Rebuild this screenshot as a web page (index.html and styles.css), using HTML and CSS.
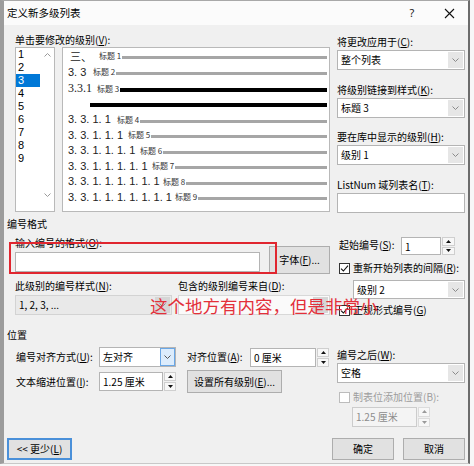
FILE: index.html
```html
<!DOCTYPE html>
<html lang="zh-CN">
<head>
<meta charset="utf-8">
<title>定义新多级列表</title>
<link rel="stylesheet" href="styles.css">
</head>
<body>
<div class="window">
  <div class="titlebar">
    <span class="title">定义新多级列表</span>
    <span class="tb-btn help">?</span>
    <span class="tb-btn close"><svg width="11" height="11" viewBox="0 0 11 11"><path d="M1 1 L10 10 M10 1 L1 10" stroke="#111" stroke-width="1.1" fill="none"/></svg></span>
  </div>

  <div class="main">
    <div class="col-left">
      <div class="lbl indent top-lbl">单击要修改的级别(<u>V</u>):</div>
      <div class="boxes">
        <div class="levels">
          <ul class="level-list">
            <li>1</li><li>2</li><li class="sel">3</li><li>4</li><li>5</li><li>6</li><li>7</li><li>8</li><li>9</li>
          </ul>
          <div class="scroll">
            <svg width="7" height="4" viewBox="0 0 7 4"><path d="M0.5 3.5 L3.5 0.5 L6.5 3.5" stroke="#9a9a9a" fill="none"/></svg>
            <svg width="7" height="4" viewBox="0 0 7 4"><path d="M0.5 0.5 L3.5 3.5 L6.5 0.5" stroke="#9a9a9a" fill="none"/></svg>
          </div>
        </div>
        <div class="preview">
          <div class="pv-row r1"><span class="num cjk w1">三、</span><span class="tag">标题 1</span><span class="bar"></span></div>
          <div class="pv-row r2"><span class="num w2">3. 3</span><span class="tag">标题 2</span><span class="bar"></span></div>
          <div class="pv-row r3"><span class="num serif w3">3.3.1</span><span class="tag">标题 3</span><span class="bar black"></span></div>
          <div class="pv-row r4"><span class="bar black"></span></div>
          <div class="pv-row rn"><span class="num w5">3. 3. 1. 1</span><span class="tag">标题 4</span><span class="bar"></span></div>
          <div class="pv-row rn"><span class="num w6">3. 3. 1. 1. 1</span><span class="tag">标题 5</span><span class="bar"></span></div>
          <div class="pv-row rn"><span class="num w7">3. 3. 1. 1. 1. 1</span><span class="tag">标题 6</span><span class="bar"></span></div>
          <div class="pv-row rn"><span class="num w8">3. 3. 1. 1. 1. 1. 1</span><span class="tag">标题 7</span><span class="bar"></span></div>
          <div class="pv-row rn"><span class="num w9">3. 3. 1. 1. 1. 1. 1. 1</span><span class="tag">标题 8</span><span class="bar"></span></div>
          <div class="pv-row rn"><span class="num w10">3. 3. 1. 1. 1. 1. 1. 1. 1</span><span class="tag">标题 9</span><span class="bar"></span></div>
        </div>
      </div>

      <div class="group-lbl fmt-group">编号格式</div>
      <div class="fmt-row">
        <div class="fmt-field">
          <div class="lbl">输入编号的格式(<u>O</u>):</div>
          <div class="input fmt-input"></div>
        </div>
        <div class="btn font-btn">字体(<u>F</u>)...</div>
      </div>

      <div class="style-row">
        <div class="field f-style">
          <div class="lbl">此级别的编号样式(<u>N</u>):</div>
          <div class="select gray"><span class="val">1, 2, 3, ...</span><span class="arrow dark"><svg width="7" height="4" viewBox="0 0 7 4"><path d="M0.5 0.5 L3.5 3.5 L6.5 0.5" stroke="#8a8a8a" fill="none"/></svg></span></div>
        </div>
        <div class="field f-from">
          <div class="lbl">包含的级别编号来自(<u>D</u>):</div>
          <div class="select soft"><span class="val"></span><span class="arrow dark"><svg width="7" height="4" viewBox="0 0 7 4"><path d="M0.5 0.5 L3.5 3.5 L6.5 0.5" stroke="#8a8a8a" fill="none"/></svg></span></div>
        </div>
      </div>

      <div class="group-lbl pos-group">位置</div>
      <div class="pos-grid">
        <div class="lbl pl1">编号对齐方式(<u>U</u>):</div>
        <div class="select"><span class="val">左对齐</span><span class="arrow focus"><svg width="7" height="4" viewBox="0 0 7 4"><path d="M0.5 0.5 L3.5 3.5 L6.5 0.5" stroke="#555" fill="none"/></svg></span></div>
        <div></div>
        <div class="lbl">对齐位置(<u>A</u>):</div>
        <div class="spin"><span class="val">0 厘米</span><span class="updown"><span class="ud"><svg width="5" height="3" viewBox="0 0 5 3"><path d="M0 3 L2.5 0 L5 3Z" fill="#111"/></svg></span><span class="ud"><svg width="5" height="3" viewBox="0 0 5 3"><path d="M0 0 L2.5 3 L5 0Z" fill="#111"/></svg></span></span></div>

        <div class="lbl pl1">文本缩进位置(<u>I</u>):</div>
        <div class="spin"><span class="val">1.25 厘米</span><span class="updown"><span class="ud"><svg width="5" height="3" viewBox="0 0 5 3"><path d="M0 3 L2.5 0 L5 3Z" fill="#111"/></svg></span><span class="ud"><svg width="5" height="3" viewBox="0 0 5 3"><path d="M0 0 L2.5 3 L5 0Z" fill="#111"/></svg></span></span></div>
        <div></div>
        <div class="btn all-btn">设置所有级别(<u>E</u>)...</div>
      </div>
    </div>

    <div class="col-right">
      <div class="lbl r-lbl1">将更改应用于(<u>C</u>):</div>
      <div class="select r-ctl"><span class="val">整个列表</span><span class="arrow"><svg width="7" height="4" viewBox="0 0 7 4"><path d="M0.5 0.5 L3.5 3.5 L6.5 0.5" stroke="#8a8a8a" fill="none"/></svg></span></div>
      <div class="lbl r-lbl2">将级别链接到样式(<u>K</u>):</div>
      <div class="select r-ctl"><span class="val">标题 3</span><span class="arrow"><svg width="7" height="4" viewBox="0 0 7 4"><path d="M0.5 0.5 L3.5 3.5 L6.5 0.5" stroke="#8a8a8a" fill="none"/></svg></span></div>
      <div class="lbl r-lbl3">要在库中显示的级别(<u>H</u>):</div>
      <div class="select r-ctl"><span class="val">级别 1</span><span class="arrow"><svg width="7" height="4" viewBox="0 0 7 4"><path d="M0.5 0.5 L3.5 3.5 L6.5 0.5" stroke="#8a8a8a" fill="none"/></svg></span></div>
      <div class="lbl r-lbl4">ListNum 域列表名(<u>T</u>):</div>
      <div class="input r-ctl"></div>

      <div class="start-row">
        <div class="lbl start-lbl">起始编号(<u>S</u>):</div>
        <div class="spin start-spin"><span class="val">1</span><span class="updown"><span class="ud"><svg width="5" height="3" viewBox="0 0 5 3"><path d="M0 3 L2.5 0 L5 3Z" fill="#111"/></svg></span><span class="ud"><svg width="5" height="3" viewBox="0 0 5 3"><path d="M0 0 L2.5 3 L5 0Z" fill="#111"/></svg></span></span></div>
      </div>
      <div class="check-row restart">
        <span class="checkbox"><svg width="9" height="9" viewBox="0 0 9 9"><path d="M1 4.6 L3.4 7 L8 1.6" stroke="#111" stroke-width="1.1" fill="none"/></svg></span>
        <span>重新开始列表的间隔(<u>R</u>):</span>
      </div>
      <div class="select level2"><span class="val">级别 2</span><span class="arrow"><svg width="7" height="4" viewBox="0 0 7 4"><path d="M0.5 0.5 L3.5 3.5 L6.5 0.5" stroke="#8a8a8a" fill="none"/></svg></span></div>
      <div class="check-row legal">
        <span class="checkbox"><svg width="9" height="9" viewBox="0 0 9 9"><path d="M1 4.6 L3.4 7 L8 1.6" stroke="#111" stroke-width="1.1" fill="none"/></svg></span>
        <span>正规形式编号(<u>G</u>)</span>
      </div>

      <div class="lbl r-lbl5">编号之后(<u>W</u>):</div>
      <div class="select r-ctl"><span class="val">空格</span><span class="arrow"><svg width="7" height="4" viewBox="0 0 7 4"><path d="M0.5 0.5 L3.5 3.5 L6.5 0.5" stroke="#8a8a8a" fill="none"/></svg></span></div>
      <div class="check-row tabpos disabled">
        <span class="checkbox"></span>
        <span>制表位添加位置(B):</span>
      </div>
      <div class="spin tab-spin disabled"><span class="val">1.25 厘米</span><span class="updown"><span class="ud"><svg width="5" height="3" viewBox="0 0 5 3"><path d="M0 3 L2.5 0 L5 3Z" fill="#9a9a9a"/></svg></span><span class="ud"><svg width="5" height="3" viewBox="0 0 5 3"><path d="M0 0 L2.5 3 L5 0Z" fill="#9a9a9a"/></svg></span></span></div>
    </div>
  </div>

  <div class="footer">
    <div class="btn less-btn">&lt;&lt; 更少(<u>L</u>)</div>
    <div class="btn ok-btn">确定</div>
    <div class="btn cancel-btn">取消</div>
  </div>

  <div class="annot-box"></div>
  <div class="annot-text">这个地方有内容，但是非常小</div>
</div>
</body>
</html>
```

FILE: styles.css
```css
* { box-sizing: border-box; }

html, body {
  margin: 0;
  padding: 0;
}

body {
  background: #f7f7f7;
  font-family: "Noto Sans CJK SC", "Noto Sans", sans-serif;
  font-size: 10px;
  line-height: 14px;
  color: #000;
  width: 474px;
  height: 466px;
  overflow: hidden;
}

u { text-decoration: underline; text-underline-offset: 1px; }

.window {
  position: relative;
  width: 470px;
  background: #f0f0f0;
  border-left: 4px solid #9c9c9c;
  border-right: 2px solid #6c6c6c;
  border-top: 1px solid #a8a8a8;
  border-bottom: 1px solid #c8c8c8;
}

/* title bar */
.titlebar {
  display: flex;
  align-items: center;
  height: 24px;
  background: #fbfbfb;
  padding-left: 3px;
}
.title { flex: 1; font-size: 10.5px; }
.tb-btn {
  display: flex;
  align-items: center;
  justify-content: center;
  height: 24px;
  font-family: "Noto Sans", sans-serif;
  font-size: 11px;
  color: #222;
}
.help { width: 38px; }
.close { width: 37px; }

/* main */
.main {
  display: flex;
  gap: 7px;
  padding: 0 3px;
  height: 413px;
}
.col-left { width: 323px; display: flex; flex-direction: column; }
.col-right { width: 128px; display: flex; flex-direction: column; }

.lbl { height: 14px; line-height: 14px; white-space: nowrap; }
.indent { padding-left: 8px; }
.top-lbl { margin-top: 8px; }
.pl1 { padding-left: 1px; }

/* level list + preview */
.boxes {
  display: flex;
  gap: 7px;
  padding-left: 8px;
  height: 165px;
}
.levels {
  width: 40px;
  display: flex;
  background: #fff;
  border: 1px solid #b9b9b9;
}
.level-list {
  list-style: none;
  margin: 0;
  padding: 0;
  width: 24px;
  font-family: "Liberation Sans", Arial, sans-serif;
  font-size: 11px;
  line-height: 13px;
}
.level-list li { padding-left: 2px; height: 13px; }
.level-list li.sel { background: #0078d7; color: #fff; }
.scroll {
  flex: 1;
  display: flex;
  flex-direction: column;
  justify-content: space-between;
  align-items: center;
  padding: 5px 0 14px;
}

.preview {
  width: 268px;
  background: #fff;
  border: 1px solid #b9b9b9;
  display: flex;
  flex-direction: column;
}
.pv-row {
  display: flex;
  align-items: center;
  padding: 0 2px 0 5px;
  color: #222;
}
.r1 { height: 16px; padding-left: 7px; }
.r2 { height: 16px; }
.r3 { height: 17px; }
.r4 { height: 15px; padding-left: 27px; }
.rn { height: 15.5px; }

.num {
  font-family: "Liberation Sans", Arial, sans-serif;
  font-size: 11px;
  line-height: 13px;
  white-space: pre;
  flex: none;
}
.num.cjk { font-family: "Noto Sans CJK SC", sans-serif; font-size: 11px; line-height: 13px; }
.num.serif { font-family: "Liberation Serif", serif; font-size: 12px; line-height: 13px; }
.w1 { width: 29px; }
.w2 { width: 25px; }
.w3 { width: 29px; }
.w5 { width: 49px; }
.w6 { width: 60px; }
.w7 { width: 72px; }
.w8 { width: 84px; }
.w9 { width: 95px; }
.w10 { width: 107px; }

.tag {
  font-size: 8px;
  line-height: 10px;
  white-space: nowrap;
  color: #333;
  flex: none;
}
.bar {
  flex: 1;
  height: 3px;
  background: #a6a6a6;
  margin-left: 1px;
  margin-top: 3px;
}
.bar.black { height: 4px; background: #000; }
.r4 .bar { margin-left: 0; margin-top: 0; }

/* group labels */
.group-lbl { height: 14px; line-height: 14px; }
.fmt-group { margin-top: 5px; }
.pos-group { margin-top: 13px; }

/* controls */
.input {
  background: #fff;
  border: 1px solid #b4b4b4;
}
.select {
  display: flex;
  align-items: stretch;
  background: #fff;
  border: 1px solid #b4b4b4;
  height: 20px;
}
.select .val {
  flex: 1;
  padding-left: 3px;
  line-height: 18px;
  white-space: nowrap;
}
.select .arrow {
  width: 15px;
  margin: 1px;
  background: #e6e6e6;
  display: flex;
  align-items: center;
  justify-content: center;
}
.select .arrow.dark { background: #d6d6d6; }
.select .arrow.focus {
  background: #dcecfc;
  border: 1px solid #6aa7e6;
  margin: 0;
  width: 15px;
}
.select.gray { background: #e9e9e9; border-color: #d3d3d3; }
.select.soft { background: #fafafa; border-color: #d8d8d8; }

.spin {
  display: flex;
  align-items: stretch;
  gap: 1px;
  height: 19px;
}
.spin .val {
  flex: 1;
  background: #fff;
  border: 1px solid #b4b4b4;
  padding-left: 3px;
  line-height: 17px;
  white-space: nowrap;
}
.updown {
  width: 12px;
  display: flex;
  flex-direction: column;
  gap: 1px;
}
.ud {
  flex: 1;
  display: flex;
  align-items: center;
  justify-content: center;
  background: #f7f7f7;
  border: 1px solid #cfcfcf;
}

.btn {
  display: flex;
  align-items: center;
  justify-content: center;
  background: #e1e1e1;
  border: 1px solid #adadad;
  white-space: nowrap;
}

/* number format */
.fmt-row {
  display: flex;
  align-items: flex-end;
  padding-left: 8px;
  margin-top: 5px;
}
.fmt-field { width: 245px; display: flex; flex-direction: column; }
.fmt-input { margin-top: 2px; height: 20px; }
.font-btn {
  width: 61px;
  height: 28px;
  margin-left: 9px;
  margin-bottom: -2px;
}

.style-row {
  display: flex;
  gap: 6px;
  padding-left: 8px;
  margin-top: 7px;
}
.field { display: flex; flex-direction: column; }
.field .select { margin-top: 2px; }
.f-style { width: 157px; }
.f-from { width: 152px; }

/* position */
.pos-grid {
  display: grid;
  grid-template-columns: 84px 77px 11px 63px 79px;
  grid-template-rows: 20px 23px;
  row-gap: 3px;
  align-items: center;
  padding-left: 8px;
  margin-top: 5px;
}
.pos-grid .select { height: 20px; }
.pos-grid .spin { height: 19px; }
.all-btn {
  grid-column: 4 / 6;
  width: 95px;
  height: 23px;
}

/* right column */
.r-lbl1 { margin-top: 10px; }
.r-lbl2 { margin-top: 13px; }
.r-lbl3 { margin-top: 12px; }
.r-lbl4 { margin-top: 13px; }
.r-lbl5 { margin-top: 31px; }
.r-ctl { margin-top: 1px; height: 20px; }

.start-row {
  display: flex;
  align-items: flex-start;
  margin-top: 24px;
  height: 18px;
}
.start-lbl { width: 64px; padding-left: 2px; margin-top: 1px; }
.start-spin { width: 54px; height: 18px; }
.start-spin .updown { width: 13px; }

.check-row {
  display: flex;
  align-items: center;
  gap: 3px;
  height: 14px;
  padding-left: 2px;
  white-space: nowrap;
}
.checkbox {
  width: 11px;
  height: 11px;
  border: 1px solid #333;
  background: #fff;
  display: flex;
  align-items: center;
  justify-content: center;
  flex: none;
}
.restart { margin-top: 6px; }
.level2 { margin-top: 5px; margin-left: 16px; height: 19px; }
.legal { margin-top: 4px; }
.tabpos { margin-top: 7px; }
.disabled { color: #9d9d9d; }
.disabled .checkbox { border-color: #bcbcbc; }
.tab-spin { margin-top: 3px; margin-left: 15px; width: 78px; height: 20px; }
.tab-spin .val { background: #f4f4f4; border-color: #cccccc; color: #8c8c8c; }
.tab-spin .ud { border-color: #dcdcdc; }

/* footer */
.footer {
  display: flex;
  gap: 9px;
  padding: 0 3px;
  height: 22px;
  margin-bottom: 3px;
}
.less-btn {
  width: 65px;
  border: 2px solid #4a90d9;
  margin-right: auto;
}
.ok-btn, .cancel-btn { width: 62px; }

/* annotation overlay */
.annot-box {
  position: absolute;
  left: 5px;
  top: 241px;
  width: 268px;
  height: 32px;
  border: 2px solid #e0262f;
}
.annot-text {
  position: absolute;
  left: 146px;
  top: 295px;
  font-size: 17.5px;
  line-height: 20px;
  color: #e3303a;
  white-space: nowrap;
}
```
